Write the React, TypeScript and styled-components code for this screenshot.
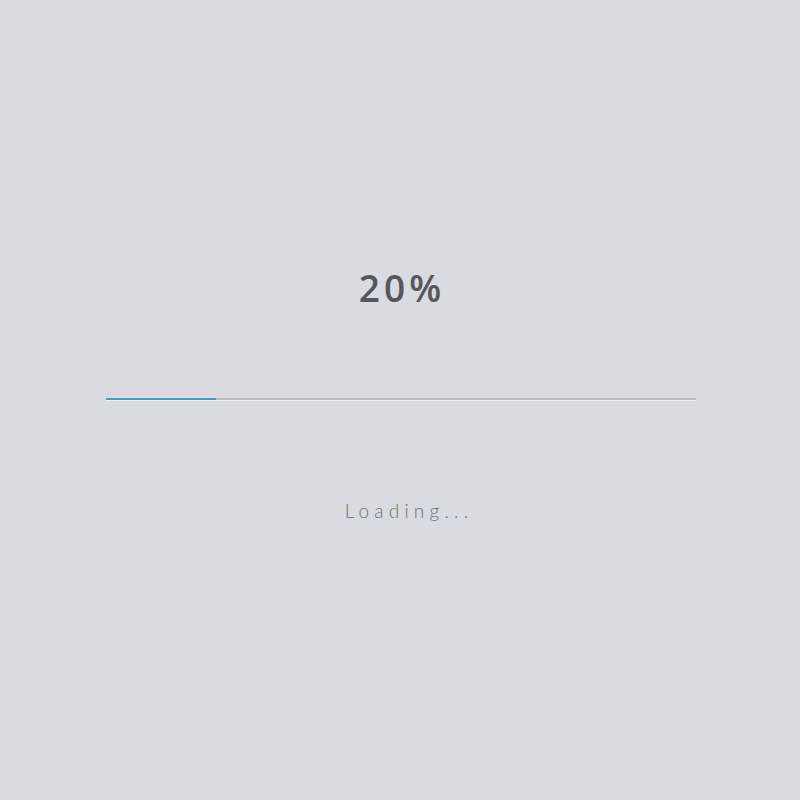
import React from "react";
import styled, { createGlobalStyle } from "styled-components";

const Global = createGlobalStyle`
  html, body { margin: 0; padding: 0; background: #d8dbdf; }
`;

const Screen = styled.div`
  width: 800px;
  height: 800px;
  background: #d8dbdf;
  display: flex;
  flex-direction: column;
  align-items: center;
  padding-top: 268px;
  box-sizing: border-box;
`;

const Percent = styled.div`
  font-family: "Open Sans", "Noto Sans", sans-serif;
  font-weight: 600;
  font-size: 37px;
  line-height: 40px;
  letter-spacing: 4px;
  padding-left: 4px;
  color: #555759;
`;

const Track = styled.div`
  margin-top: 90px;
  margin-left: 2px;
  width: 590px;
  height: 2px;
  background: #b9bdc1;
  box-shadow: 0 1px 0 #eef0f2;
`;

const Fill = styled.div<{ $pct: number }>`
  height: 100%;
  width: ${(p) => p.$pct}%;
  background: #3a9ed1;
`;

const Caption = styled.div`
  margin-top: 99px;
  padding-left: 18px;
  font-family: "Lato", "Inter", sans-serif;
  font-weight: 300;
  font-size: 19px;
  line-height: 24px;
  letter-spacing: 5.2px;
  color: #6f7275;
`;

export default function App() {
  const progress = 20;
  return (
    <>
      <Global />
      <Screen>
        <Percent>{progress}%</Percent>
        <Track>
          <Fill $pct={18.6} />
        </Track>
        <Caption>Loading...</Caption>
      </Screen>
    </>
  );
}
